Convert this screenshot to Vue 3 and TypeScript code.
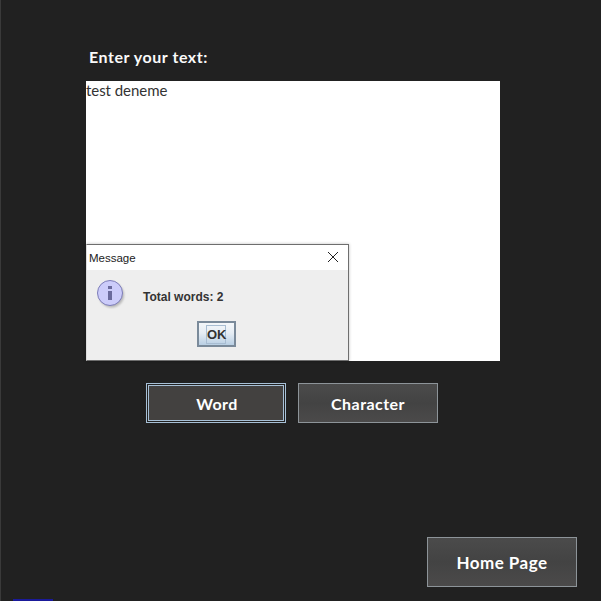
<script setup lang="ts">
const title: string = 'Enter your text:'
const body: string = 'test deneme'
</script>

<template>
  <main class="page">
    <div class="left-edge"></div>
    <section class="content">
      <h1 class="heading">{{ title }}</h1>
      <div class="editor-wrap">
        <div class="editor">{{ body }}</div>
        <div class="dialog">
          <header class="dialog-title">
            <span>Message</span>
            <svg class="close" width="12" height="12" viewBox="0 0 12 12">
              <path d="M1 1L11 11M11 1L1 11" stroke="#222" stroke-width="1" fill="none" />
            </svg>
          </header>
          <div class="dialog-body">
            <div class="message-row">
              <svg class="info" width="30" height="30" viewBox="0 0 30 30">
                <defs>
                  <filter id="sh" x="-20%" y="-20%" width="150%" height="150%">
                    <feGaussianBlur stdDeviation="1.2" />
                  </filter>
                </defs>
                <circle cx="15.5" cy="16" r="12.5" fill="#888" opacity="0.55" filter="url(#sh)" />
                <circle cx="14" cy="14" r="12.5" fill="#ccccfa" stroke="#7d7db8" stroke-width="1" />
                <rect x="12" y="7" width="4" height="3" fill="#6a6a9c" />
                <rect x="12" y="12" width="4" height="9" fill="#6a6a9c" />
              </svg>
              <span class="message">Total words: 2</span>
            </div>
            <button class="ok"><span class="ok-focus">OK</span></button>
          </div>
        </div>
      </div>
      <div class="actions">
        <button class="btn btn-word"><span class="word-inner">Word</span></button>
        <button class="btn btn-char">Character</button>
      </div>
      <div class="footer">
        <button class="btn btn-home">Home Page</button>
      </div>
    </section>
    <div class="bottom-sliver"></div>
  </main>
</template>

<style>
html, body { margin: 0; background: #212121; }
</style>

<style scoped>
.page {
  position: relative;
  width: 601px;
  height: 601px;
  box-sizing: border-box;
  background: #212121;
  overflow: hidden;
  font-family: "Lato", "Liberation Sans", sans-serif;
}
.left-edge {
  position: absolute;
  left: 0;
  top: 0;
  bottom: 0;
  width: 1px;
  background: #3a3a3a;
}
.bottom-sliver {
  position: absolute;
  left: 13px;
  bottom: 0;
  width: 40px;
  height: 2px;
  background: #1a1a9a;
}
.content {
  display: flex;
  flex-direction: column;
  padding: 47px 24px 14px 86px;
  height: 100%;
  box-sizing: border-box;
}
.heading {
  margin: 0 0 15px 3px;
  height: 19px;
  line-height: 19px;
  font-size: 16px;
  font-weight: 700;
  color: #fafafa;
  letter-spacing: 0.55px;
}
.editor-wrap {
  position: relative;
  width: 414px;
  height: 280px;
}
.editor {
  height: 100%;
  background: #fff;
  color: #333;
  font-size: 15px;
  line-height: 18px;
  letter-spacing: -0.05px;
}
.dialog {
  position: absolute;
  left: 0;
  bottom: 0;
  width: 263px;
  height: 117px;
  box-sizing: border-box;
  border: 1px solid #6e6e6e;
  border-left-color: #ddd;
  background: #eeeeee;
  box-shadow: 0 0 3px rgba(0, 0, 0, 0.25);
  font-family: "Liberation Sans", Arial, sans-serif;
}
.dialog-title {
  height: 25px;
  background: #fff;
  display: flex;
  align-items: center;
  justify-content: space-between;
  padding: 0 9px 0 2px;
  font-size: 11.5px;
  color: #222;
}
.close { display: block; margin-top: -1px; }
.dialog-body {
  display: flex;
  flex-direction: column;
  align-items: center;
}
.message-row {
  align-self: flex-start;
  display: flex;
  align-items: center;
  height: 51px;
  padding-left: 9px;
}
.info { display: block; margin-right: 17px; margin-top: -4px; }
.message {
  margin-top: 2px;
  font-size: 12px;
  font-weight: 700;
  color: #333;
}
.ok {
  width: 39px;
  height: 26px;
  margin: 0 3px 0 0;
  padding: 0;
  box-sizing: border-box;
  border: 2px solid #7a8a9a;
  background: linear-gradient(#f4f7fa, #e6edf4 45%, #b9cfe4);
  display: flex;
  align-items: center;
  justify-content: center;
  font: 700 13px "Liberation Sans", Arial, sans-serif;
  color: #333;
}
.ok-focus {
  display: block;
  width: 18px;
  height: 17px;
  line-height: 17px;
  border: 1px solid #a8bdd2;
}
.actions {
  display: flex;
  gap: 12px;
  margin: 22px 0 0 60px;
}
.btn {
  box-sizing: border-box;
  padding: 0;
  border: 1px solid #8d9499;
  background: linear-gradient(#4b4b4b, #434343 50%, #4b4a4a);
  color: #fff;
  font-family: "Lato", "Liberation Sans", sans-serif;
  font-weight: 700;
  font-size: 16px;
  letter-spacing: 0.45px;
  display: flex;
  align-items: center;
  justify-content: center;
}
.btn-word, .btn-char { width: 140px; height: 40px; }
.btn-word {
  border: 1px solid #a7c0d6;
  background: #212121;
  padding: 1px;
}
.word-inner {
  display: flex;
  align-items: center;
  justify-content: center;
  width: 100%;
  height: 100%;
  box-sizing: border-box;
  padding-left: 2px;
  border: 1px solid #a7c0d6;
  background: #434140;
}
.footer {
  margin-top: auto;
  display: flex;
  justify-content: flex-end;
}
.btn-home { width: 150px; height: 50px; font-size: 17px; }
</style>
